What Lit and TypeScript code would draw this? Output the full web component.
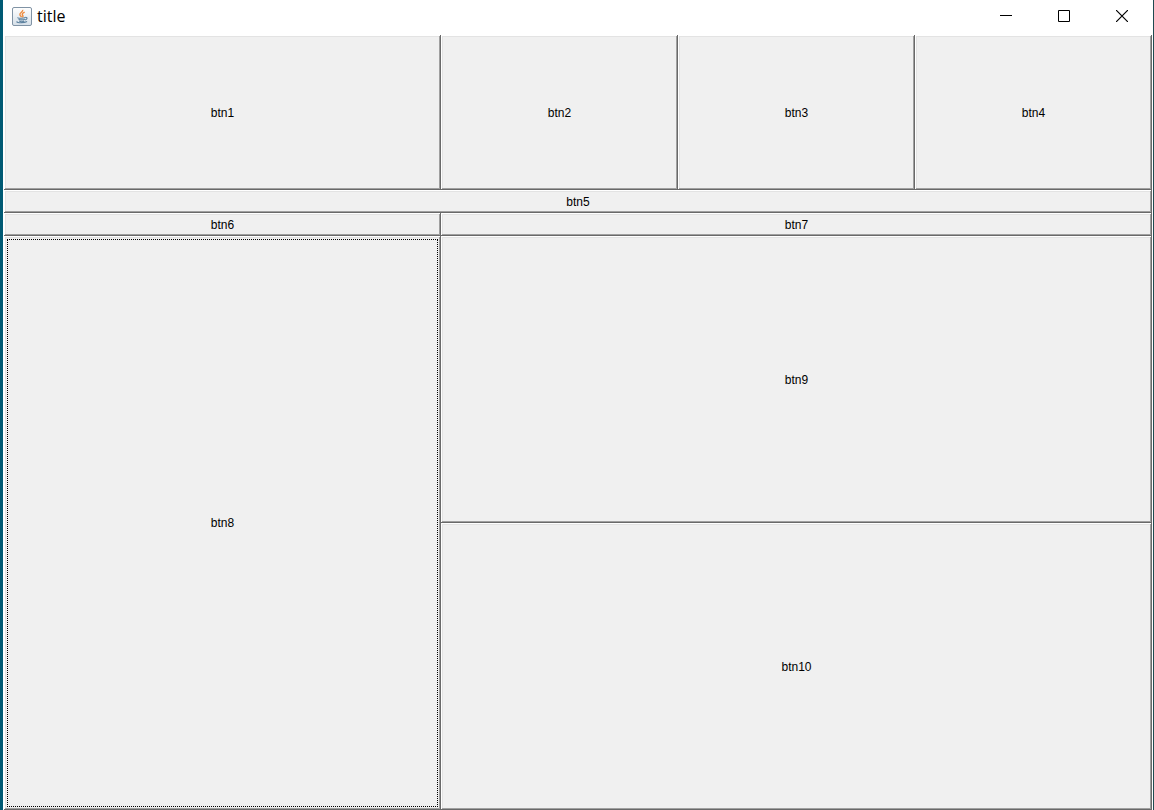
import { LitElement, html, css, svg } from "lit";
import { customElement, property } from "lit/decorators.js";
import { classMap } from "lit/directives/class-map.js";

interface Cell {
  label: string;
  area: string;
  focused?: boolean;
}

const CELLS: Cell[] = [
  { label: "btn1", area: "1 / 1 / 2 / 2" },
  { label: "btn2", area: "1 / 2 / 2 / 3" },
  { label: "btn3", area: "1 / 3 / 2 / 4" },
  { label: "btn4", area: "1 / 4 / 2 / 5" },
  { label: "btn5", area: "2 / 1 / 3 / 5" },
  { label: "btn6", area: "3 / 1 / 4 / 2" },
  { label: "btn7", area: "3 / 2 / 4 / 5" },
  { label: "btn8", area: "4 / 1 / 6 / 2", focused: true },
  { label: "btn9", area: "4 / 2 / 5 / 5" },
  { label: "btn10", area: "5 / 2 / 6 / 5" },
];

@customElement("awt-button")
class AwtButton extends LitElement {
  @property() label = "";
  @property({ type: Boolean }) focused = false;

  static styles = css`
    :host {
      display: grid;
      min-width: 0;
      min-height: 0;
    }
    .button {
      display: grid;
      margin: 0;
      padding: 2px;
      border: 0;
      border-radius: 0;
      outline: none;
      background: #f0f0f0;
      box-shadow: inset -1px -1px #696969, inset 1px 1px #fff,
        inset -2px -2px #a0a0a0, inset 2px 2px #e3e3e3;
      color: #000;
      font: 12px/16px "Liberation Sans", Arial, sans-serif;
    }
    .face {
      display: grid;
      place-items: center;
      border: 0 dotted #000;
    }
    .focused {
      margin: 1px;
      border-width: 1px;
    }
  `;

  render() {
    return html`<button class="button" type="button">
      <span class=${classMap({ face: true, focused: this.focused })}>${this.label}</span>
    </button>`;
  }
}

const javaIcon = svg`
  <defs>
    <linearGradient id="plate" x1="0" y1="0" x2="0" y2="1">
      <stop offset="0" stop-color="#fff" />
      <stop offset="1" stop-color="#d5dfe8" />
    </linearGradient>
  </defs>
  <rect x="0.5" y="0.5" width="19" height="18" rx="1.5" fill="url(#plate)" stroke="#8093a5" />
  <path d="M10.6 2.8c1.2 1.8-3.4 2.900-2.700 5 .2.8 1.100 1.400 1.700 2.200M12.700 5.200c-1.700.8-3.100 1.700-2.100 3 .6.8.5 1.400-.3 2" fill="none" stroke="#ed8b3f" stroke-width="1.4" />
  <path d="M6.200 10.500c-2 .9 5.200 1.200 7.200.1M6.600 12.300c1.200.8 4.700.8 6.200 0M7.200 14c1.200.7 3.800.7 5 0M13.500 10.400c2.400-.2 1.800 2-.5 2.600M5.500 14.400c-3 1.200 5.500 2.300 9.600.2" fill="none" stroke="#5d829f" stroke-width="1.1" />
`;

@customElement("app-root")
class AppRoot extends LitElement {
  static styles = css`
    :host {
      display: block;
      height: 100vh;
    }
    .window {
      box-sizing: border-box;
      display: grid;
      grid-template-rows: 35px 1fr;
      height: 100%;
      border-left: 3px solid #005a74;
      border-right: 1px solid #1f4a50;
      background: #fff;
    }
    .titlebar {
      display: flex;
      align-items: center;
      padding: 0 2px 3px 9px;
      box-sizing: border-box;
    }
    .icon {
      width: 20px;
      height: 19px;
    }
    .title {
      flex: 1;
      margin: 0;
      padding-left: 5px;
      font: 16px/20px "Open Sans", "Noto Sans", sans-serif;
      color: #000;
    }
    .control {
      display: grid;
      place-items: center;
      width: 58px;
      height: 32px;
      margin: 0;
      padding: 0;
      border: 0;
      background: none;
    }
    .control svg {
      width: 12px;
      height: 12px;
      fill: none;
      stroke: #000;
    }
    .content {
      display: grid;
      grid-template-columns: 437fr 237fr 237fr 237fr;
      grid-template-rows: 155fr 23px 23px 287fr 287fr;
      min-height: 0;
      padding: 0 1px;
    }
  `;

  render() {
    return html`
      <div class="window">
        <header class="titlebar">
          <svg class="icon" viewBox="0 0 20 19" aria-hidden="true">${javaIcon}</svg>
          <h1 class="title">title</h1>
          <button class="control" type="button" aria-label="Minimize">
            <svg viewBox="0 0 12 12"><path d="M0 5.500h12" /></svg>
          </button>
          <button class="control" type="button" aria-label="Maximize">
            <svg viewBox="0 0 12 12"><path d="M.5.500h11v11H.5z" /></svg>
          </button>
          <button class="control" type="button" aria-label="Close">
            <svg viewBox="0 0 12 12"><path d="M0 0l12 12M12 0L0 12" stroke-width="1.2" /></svg>
          </button>
        </header>
        <main class="content">
          ${CELLS.map(
            (c) => html`<awt-button
              style="grid-area: ${c.area}"
              .label=${c.label}
              .focused=${c.focused ?? false}
            ></awt-button>`
          )}
        </main>
      </div>
    `;
  }
}
